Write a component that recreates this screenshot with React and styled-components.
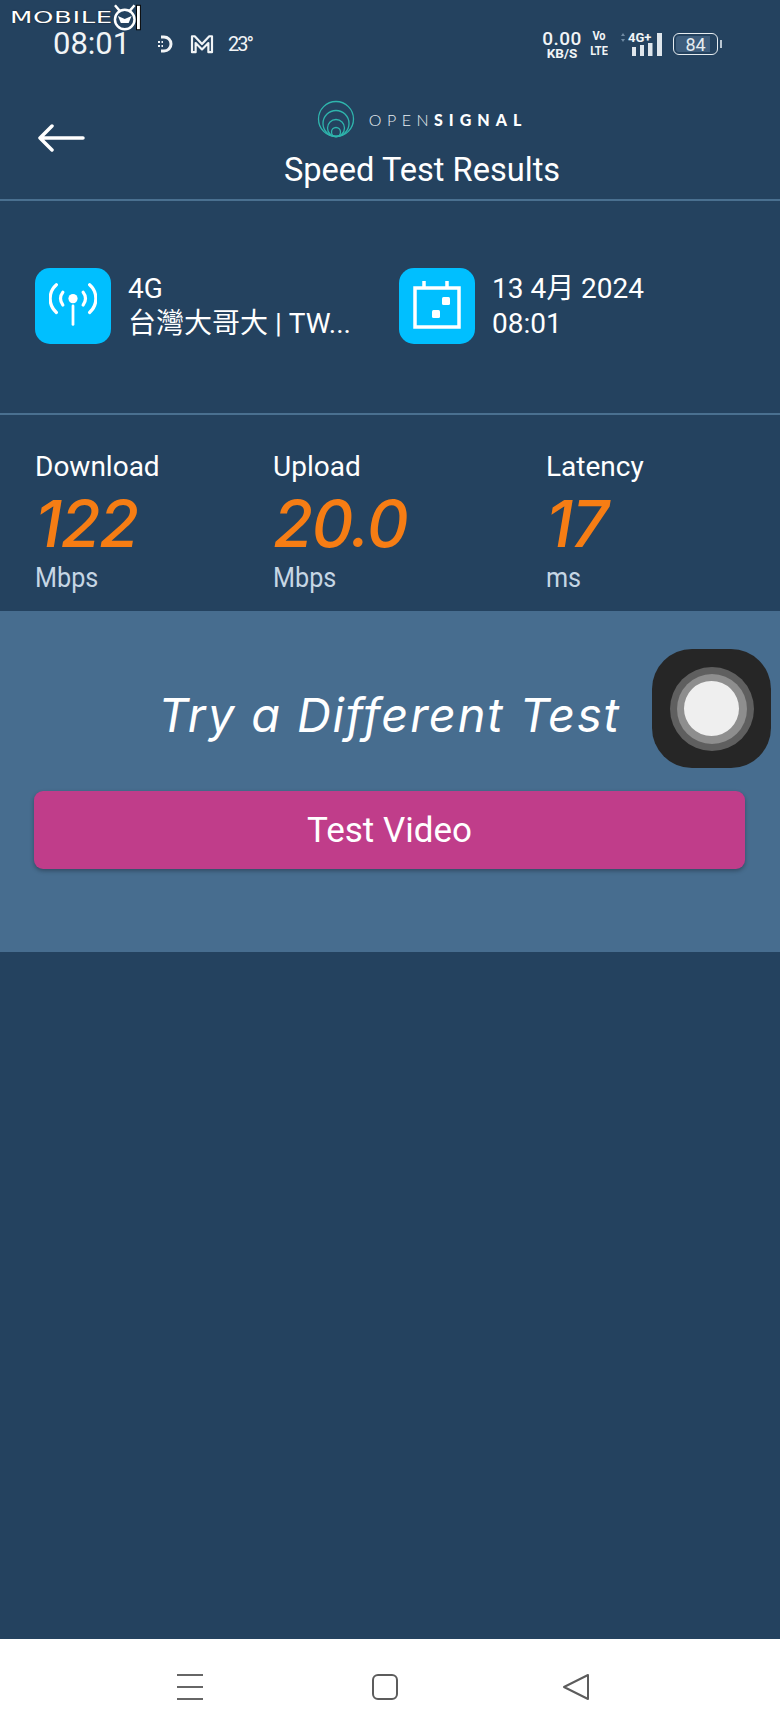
import React from "react";
import styled, { createGlobalStyle } from "styled-components";

const GlobalStyle = createGlobalStyle`
  html, body {
    margin: 0;
    padding: 0;
    background: #24425f;
  }
  * {
    box-sizing: border-box;
  }
`;

const Page = styled.div`
  position: relative;
  width: 780px;
  height: 1734px;
  display: flex;
  flex-direction: column;
  overflow: hidden;
  background: #24425f;
  color: #fff;
  font-family: Roboto, "Noto Sans CJK TC", sans-serif;
`;

const Watermark = styled.div`
  position: absolute;
  left: 10px;
  top: 4px;
  display: flex;
  align-items: center;
  width: 136px;
  height: 28px;
`;

const WatermarkText = styled.span`
  display: block;
  width: 104px;
  font-family: "DejaVu Sans", sans-serif;
  font-size: 16px;
  font-weight: 400;
  line-height: 16px;
  letter-spacing: 0.4px;
  color: #fff;
  text-shadow: 0 0 1px #000;
  transform: scaleX(1.62);
  transform-origin: left center;
`;

const StatusBar = styled.div`
  height: 76px;
  display: flex;
  align-items: flex-start;
  justify-content: space-between;
  padding: 28px 62px 0 53px;
`;

const StatusGroup = styled.div`
  display: flex;
  align-items: center;
  height: 32px;
`;

const Clock = styled.span`
  font-size: 31px;
  line-height: 32px;
  width: 104px;
  color: #f1f4f6;
`;

const Temp = styled.span`
  margin-left: 14px;
  font-size: 20px;
  letter-spacing: -2px;
  color: #f1f4f6;
`;

const Speed = styled.div`
  display: flex;
  flex-direction: column;
  align-items: center;
  font-weight: 700;
  width: 40px;
  color: #f1f4f6;
`;

const SpeedValue = styled.span`
  font-size: 19px;
  line-height: 17px;
  letter-spacing: 0.5px;
  font-weight: 500;
`;

const SpeedUnit = styled.span`
  font-size: 13.5px;
  line-height: 12px;
`;

const Volte = styled.div`
  display: flex;
  flex-direction: column;
  align-items: center;
  width: 16px;
  margin-left: 9px;
  font-size: 11px;
  line-height: 12px;
  font-weight: 700;
  color: #f1f4f6;
  transform: scaleY(1.2);
`;

const Battery = styled.div`
  position: relative;
  width: 45px;
  height: 22px;
  margin-left: 9px;
  border: 1.5px solid #e6ecf0;
  border-radius: 6px;
  display: flex;
  align-items: center;
  justify-content: center;
  font-size: 18px;
  color: #e6ecf0;
  background: linear-gradient(90deg, #3e5d7c 84%, transparent 84%);
  background-clip: content-box;
  padding: 2px;

  &::after {
    content: "";
    position: absolute;
    right: -5px;
    top: 6px;
    width: 2px;
    height: 8px;
    background: #b9c6d2;
  }
`;

const Header = styled.header`
  height: 123px;
  display: flex;
  flex-direction: column;
  align-items: center;
  position: relative;
  padding: 24px 0 0 64px;
`;

const BackButton = styled.div`
  position: absolute;
  left: 38px;
  top: 48px;
  line-height: 0;
`;

const Brand = styled.div`
  display: flex;
  align-items: center;
  gap: 14px;
  height: 38px;
`;

const BrandName = styled.span`
  font-family: Lato, sans-serif;
  font-size: 16px;
  font-weight: 300;
  letter-spacing: 5.5px;
  color: #e8eef2;

  b {
    font-weight: 900;
    color: #fff;
    letter-spacing: 6px;
  }
`;

const Title = styled.h1`
  margin: 13px 0 0;
  font-size: 32.6px;
  font-weight: 400;
  line-height: 38px;
`;

const Divider = styled.div`
  height: 2px;
  background: #4a7090;
`;

const InfoRow = styled.section`
  height: 212px;
  display: grid;
  grid-template-columns: 364px 1fr;
  align-items: center;
  padding: 0 0 2px 35px;
`;

const InfoItem = styled.div`
  display: flex;
  align-items: center;
  gap: 17px;
`;

const IconTile = styled.div`
  width: 76px;
  height: 76px;
  flex: none;
  border-radius: 15px;
  background: #00bfff;
  display: flex;
  align-items: center;
  justify-content: center;
`;

const InfoText = styled.div`
  font-size: 28px;
  line-height: 35px;
  white-space: nowrap;
`;

const Stats = styled.section`
  height: 196px;
  display: grid;
  grid-template-columns: 238px 273px 1fr;
  padding: 35px 0 0 35px;
`;

const Stat = styled.div`
  display: flex;
  flex-direction: column;
  align-items: flex-start;
`;

const StatLabel = styled.span`
  font-size: 28px;
  line-height: 34px;
`;

const StatValue = styled.span`
  margin-top: 4px;
  font-family: Inter, sans-serif;
  font-style: italic;
  font-weight: 500;
  font-size: 65px;
  line-height: 72px;
  letter-spacing: -1.5px;
  color: #f67d14;
`;

const StatUnit = styled.span`
  margin-top: 1px;
  font-size: 28px;
  line-height: 34px;
  color: #c6d6e4;
  transform: scaleX(0.9);
  transform-origin: left center;
`;

const TryPanel = styled.section`
  height: 341px;
  background: #476d8f;
  padding: 76px 35px 0 34px;
`;

const TryTitle = styled.h2`
  margin: 0;
  text-align: center;
  font-family: Inter, sans-serif;
  font-style: italic;
  font-weight: 400;
  font-size: 47px;
  line-height: 56px;
  letter-spacing: 1.8px;
  color: #fff;
`;

const TestButton = styled.div`
  margin-top: 48px;
  height: 78px;
  border-radius: 9px;
  background: #c03d8a;
  box-shadow: 0 2px 4px rgba(0, 0, 0, 0.3);
  display: flex;
  align-items: center;
  justify-content: center;
  font-size: 35px;
`;

const Spacer = styled.div`
  flex: 1;
`;

const NavBar = styled.nav`
  height: 95px;
  background: #fff;
  display: flex;
  align-items: center;
  justify-content: flex-start;
`;

const NavSlot = styled.div`
  position: absolute;
  left: ${(p) => p.$left}px;
  line-height: 0;
`;

const AssistiveTouch = styled.div`
  position: absolute;
  left: 652px;
  top: 649px;
  width: 119px;
  height: 119px;
  border-radius: 40px;
  background: #262626;
  display: flex;
  align-items: center;
  justify-content: center;
`;

const Ring = styled.div`
  width: ${(p) => p.$size}px;
  height: ${(p) => p.$size}px;
  border-radius: 50%;
  background: ${(p) => p.$color};
  display: flex;
  align-items: center;
  justify-content: center;
`;

const stats = [
  { label: "Download", value: "122", unit: "Mbps" },
  { label: "Upload", value: "20.0", unit: "Mbps" },
  { label: "Latency", value: "17", unit: "ms" },
];

const App = () => {
  return (
    <Page>
      <GlobalStyle />
      <StatusBar>
        <StatusGroup>
          <Clock>08:01</Clock>
          <svg width="16" height="20" viewBox="0 0 16 20" fill="none" stroke="#f1f4f6" strokeWidth="3">
            <path d="M4 3h3a7 7 0 0 1 0 14H4" />
            <path d="M1 8h5M1 12h5" strokeWidth="2" strokeDasharray="2 1.500" />
          </svg>
          <svg width="24" height="20" viewBox="0 0 26 22" fill="none" stroke="#f1f4f6" strokeWidth="2.400" strokeLinejoin="round" style={{ marginLeft: 17 }}>
            <path d="M2 20V2.500h3L13 11l8-8.500h3V20h-4V10l-7 7-7-7v10z" />
          </svg>
          <Temp>23°</Temp>
        </StatusGroup>
        <StatusGroup>
          <Speed>
            <SpeedValue>0.00</SpeedValue>
            <SpeedUnit>KB/S</SpeedUnit>
          </Speed>
          <Volte>
            <span>Vo</span>
            <span>LTE</span>
          </Volte>
          <svg width="44" height="26" viewBox="0 0 44 26" style={{ marginLeft: 13 }}>
            <path d="M1 5l2-3 2 3zM1 8l2 3 2-3z" fill="#6f8aa3" />
            <text x="8" y="11" fontFamily="Roboto, sans-serif" fontWeight="700" fontSize="13" fill="#f1f4f6">4G+</text>
            <rect x="12" y="16" width="4" height="9" fill="#dfe6ec" />
            <rect x="20" y="14" width="4" height="11" fill="#dfe6ec" />
            <rect x="28" y="12" width="4.500" height="13" fill="#dfe6ec" />
            <rect x="37" y="2" width="5" height="23" fill="#dfe6ec" />
          </svg>
          <Battery>84</Battery>
        </StatusGroup>
      </StatusBar>

      <Header>
        <BackButton>
          <svg width="48" height="28" viewBox="0 0 48 28" fill="none" stroke="#fff" strokeWidth="3.500" strokeLinecap="round" strokeLinejoin="round">
            <path d="M2 14h43M14 2L2 14l12 12" />
          </svg>
        </BackButton>
        <Brand>
          <svg width="38" height="38" viewBox="0 0 38 38" fill="none" stroke="#2fb5ad" strokeWidth="1.300">
            <circle cx="19" cy="19" r="17.500" />
            <circle cx="19" cy="23.500" r="13" />
            <circle cx="19" cy="28" r="8.500" />
            <circle cx="19" cy="32" r="4.500" />
          </svg>
          <BrandName>
            OPEN<b>SIGNAL</b>
          </BrandName>
        </Brand>
        <Title>Speed Test Results</Title>
      </Header>
      <Divider />

      <InfoRow>
        <InfoItem>
          <IconTile>
            <svg width="48" height="48" viewBox="0 0 52 52" fill="none" stroke="#fff" strokeWidth="3.500" strokeLinecap="round">
              <circle cx="26" cy="18" r="5" fill="#fff" stroke="none" />
              <path d="M26 26v20" strokeWidth="3" />
              <path d="M15 11A11 11 0 0 0 15 25M37 11A11 11 0 0 1 37 25" />
              <path d="M8 3A20 20 0 0 0 8 33M44 3A20 20 0 0 1 44 33" />
            </svg>
          </IconTile>
          <InfoText>
            4G
            <br />
            台灣大哥大 | TW...
          </InfoText>
        </InfoItem>
        <InfoItem>
          <IconTile>
            <svg width="50" height="50" viewBox="0 0 50 50" fill="none" stroke="#fff" strokeWidth="3.500">
              <path d="M3 7h44v39H3zM12 0v8M35 0v8" />
              <rect x="30" y="16" width="8" height="8" rx="1.500" fill="#fff" stroke="none" />
              <rect x="20" y="29" width="8" height="8" rx="1.500" fill="#fff" stroke="none" />
            </svg>
          </IconTile>
          <InfoText>
            13 4月 2024
            <br />
            08:01
          </InfoText>
        </InfoItem>
      </InfoRow>
      <Divider />

      <Stats>
        {stats.map((s) => (
          <Stat key={s.label}>
            <StatLabel>{s.label}</StatLabel>
            <StatValue>{s.value}</StatValue>
            <StatUnit>{s.unit}</StatUnit>
          </Stat>
        ))}
      </Stats>

      <TryPanel>
        <TryTitle>Try a Different Test</TryTitle>
        <TestButton>Test Video</TestButton>
      </TryPanel>

      <Spacer />

      <NavBar>
        <NavSlot $left={176}>
          <svg width="28" height="28" viewBox="0 0 28 28" stroke="#666" strokeWidth="2">
            <path d="M1 2h26M1 14h26M1 26h26" />
          </svg>
        </NavSlot>
        <NavSlot $left={371}>
          <svg width="28" height="28" viewBox="0 0 28 28" fill="none" stroke="#5c5c5c" strokeWidth="2">
            <rect x="2" y="2" width="24" height="24" rx="5" />
          </svg>
        </NavSlot>
        <NavSlot $left={562}>
          <svg width="28" height="28" viewBox="0 0 28 28" fill="none" stroke="#5c5c5c" strokeWidth="2" strokeLinejoin="round">
            <path d="M26 2v24L2 14z" />
          </svg>
        </NavSlot>
      </NavBar>

      <AssistiveTouch>
        <Ring $size={84} $color="#5f5f5f">
          <Ring $size={70} $color="#8e8e8e">
            <Ring $size={55} $color="#efefef" />
          </Ring>
        </Ring>
      </AssistiveTouch>

      <Watermark>
        <WatermarkText>MOBILE</WatermarkText>
        <svg width="34" height="28" viewBox="0 0 34 28" style={{ marginLeft: 1 }}>
          <path d="M2 1l6 7M22 1l-6 7" stroke="#fff" strokeWidth="2.500" />
          <circle cx="12" cy="15.500" r="10" fill="#24425f" stroke="#fff" strokeWidth="2.500" />
          <path d="M5 12l7 3 7-3-3 7h-8z" fill="#fff" />
          <rect x="24" y="1" width="4" height="25" fill="#fff" stroke="#000" strokeWidth="1" />
        </svg>
      </Watermark>
    </Page>
  );
};

export default App;
